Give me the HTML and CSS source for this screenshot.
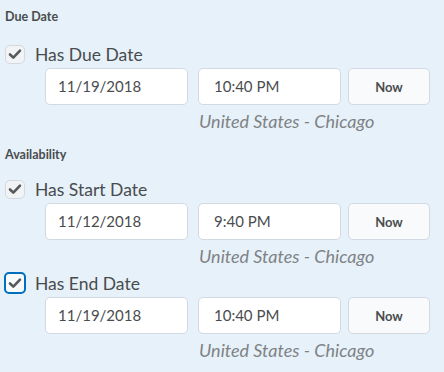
FILE: index.html
```html
<!DOCTYPE html>
<html lang="en">
<head>
  <meta charset="UTF-8">
  <title>Dates</title>
  <link rel="stylesheet" href="styles.css">
</head>
<body>
  <div class="panel">
    <h3 class="section-title first">Due Date</h3>
    <label class="check-row">
      <span class="checkbox">
        <svg width="14" height="14" viewBox="0 0 14 14"><polyline points="2,7.5 5.3,10.6 12,3.6" fill="none" stroke="#565a5c" stroke-width="2.6" stroke-linecap="round" stroke-linejoin="round"/></svg>
      </span>
      <span class="check-label">Has Due Date</span>
    </label>
    <div class="date-row">
      <div class="field date">11/19/2018</div>
      <div class="field time">10:40 PM</div>
      <button class="btn-now">Now</button>
    </div>
    <div class="tz">United States - Chicago</div>

    <h3 class="section-title">Availability</h3>
    <label class="check-row">
      <span class="checkbox">
        <svg width="14" height="14" viewBox="0 0 14 14"><polyline points="2,7.5 5.3,10.6 12,3.6" fill="none" stroke="#565a5c" stroke-width="2.6" stroke-linecap="round" stroke-linejoin="round"/></svg>
      </span>
      <span class="check-label">Has Start Date</span>
    </label>
    <div class="date-row">
      <div class="field date">11/12/2018</div>
      <div class="field time">9:40 PM</div>
      <button class="btn-now">Now</button>
    </div>
    <div class="tz">United States - Chicago</div>

    <label class="check-row next">
      <span class="checkbox focused">
        <svg width="14" height="14" viewBox="0 0 14 14"><polyline points="2,7.5 5.3,10.6 12,3.6" fill="none" stroke="#565a5c" stroke-width="2.6" stroke-linecap="round" stroke-linejoin="round"/></svg>
      </span>
      <span class="check-label">Has End Date</span>
    </label>
    <div class="date-row">
      <div class="field date">11/19/2018</div>
      <div class="field time">10:40 PM</div>
      <button class="btn-now">Now</button>
    </div>
    <div class="tz">United States - Chicago</div>
  </div>
</body>
</html>
```

FILE: styles.css
```css
body {
  margin: 0;
  font-family: Lato, 'Open Sans', sans-serif;
  color: #494c4e;
  background: #e8f2f9;
}

.panel {
  height: 372px;
  padding: 9px 0 0 5px;
  box-sizing: border-box;
  background: #e6f1f9;
}

.section-title {
  margin: 16px 0 0 0;
  font-size: 12.5px;
  line-height: 16px;
  font-weight: bold;
  color: #494c4e;
}

.section-title.first {
  margin-top: 0;
}

.check-row {
  display: flex;
  align-items: center;
  height: 20px;
  margin-top: 16px;
}

.section-title.first + .check-row {
  margin-top: 19px;
}

.check-row.next {
  margin-top: 7px;
}

.checkbox {
  width: 20px;
  height: 19px;
  border: 1px solid #d3d9e3;
  border-radius: 5px;
  background: #f1f3f5;
  display: flex;
  align-items: center;
  justify-content: center;
  box-sizing: border-box;
}

.checkbox.focused {
  width: 22px;
  height: 22px;
  margin: 0 -1px 0 -1px;
  border: 2px solid #006fbf;
  background: #f9fafb;
}

.check-label {
  margin-left: 10px;
  font-size: 17.5px;
}

.date-row {
  display: flex;
  margin: 4px 0 0 40px;
}

.field {
  height: 37px;
  width: 143px;
  box-sizing: border-box;
  background: #fff;
  border: 1px solid #d3d9e3;
  border-radius: 5px;
  font-size: 15px;
  line-height: 35px;
}

.field.date {
  padding-left: 12px;
}

.field.time {
  margin-left: 10px;
  padding-left: 15px;
}

.btn-now {
  margin-left: 7px;
  width: 82px;
  height: 37px;
  background: #f9fafb;
  border: 1px solid #d3d9e3;
  border-radius: 5px;
  font-family: Lato, sans-serif;
  font-size: 13px;
  font-weight: bold;
  color: #494c4e;
}

.tz {
  margin: 6px 0 0 194px;
  font-size: 18px;
  line-height: 20px;
  font-style: italic;
  color: #7f8285;
}
```
